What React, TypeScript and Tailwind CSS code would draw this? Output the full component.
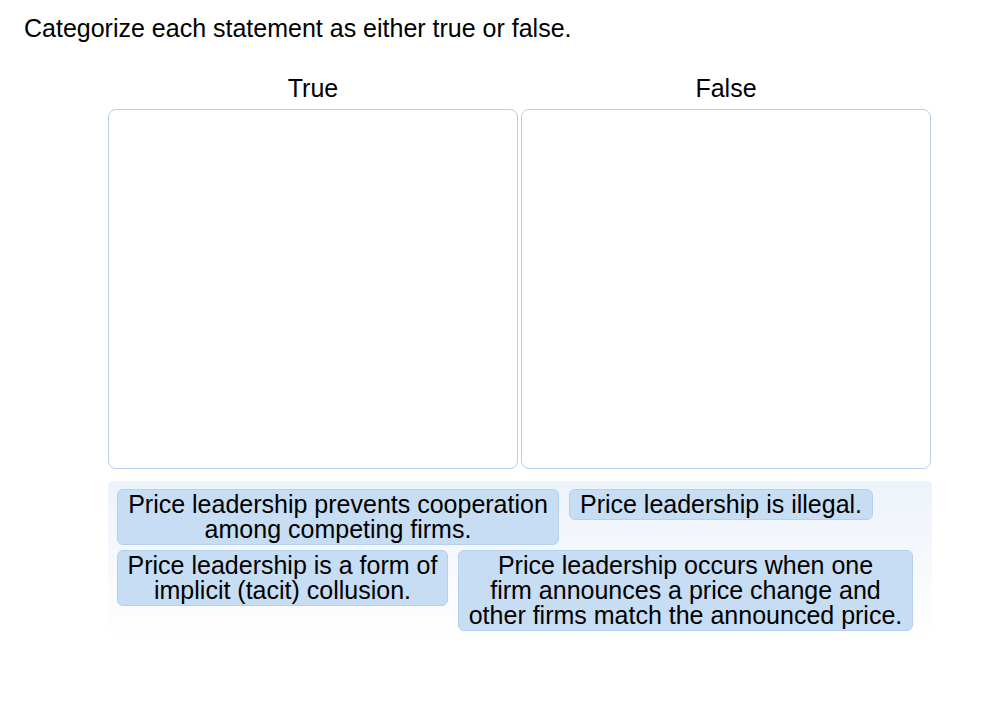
import React from 'react';

const font = { fontFamily: '"Liberation Sans", Arial, sans-serif' };

const chips = [
  { lines: ['Price leadership prevents cooperation', 'among competing firms.'], w: 'w-[442px]' },
  { lines: ['Price leadership is illegal.'], w: 'w-[304px]' },
  { lines: ['Price leadership is a form of', 'implicit (tacit) collusion.'], w: 'w-[331px]' },
  {
    lines: ['Price leadership occurs when one', 'firm announces a price change and', 'other firms match the announced price.'],
    w: 'w-[455px]',
  },
];

const App = () => {
  return (
    <div className="w-[1000px] h-[702px] bg-white text-black" style={font}>
      <div className="pl-[24px] pt-[16px] text-[25px] leading-[25px] whitespace-nowrap">
        Categorize each statement as either true or false.
      </div>

      <div className="ml-[108px] mt-[35px] w-[824px]">
        <div className="flex gap-[3px]">
          {['True', 'False'].map((label) => (
            <div key={label} className="w-[410px] flex flex-col">
              <div className="text-center text-[25px] leading-[25px] h-[33px]">{label}</div>
              <div className="h-[360px] border border-[#b6cfea] rounded-[8px] bg-white" />
            </div>
          ))}
        </div>

        <div className="mt-[12px] rounded-[5px] bg-gradient-to-b from-[#edf3fb] to-white pl-[9px] pr-[9px] pt-[8px] pb-[10px] flex flex-wrap items-start gap-x-[10px] gap-y-[5px]">
          {chips.map((c) => (
            <div
              key={c.lines[0]}
              className={`${c.w} bg-[#c7ddf3] border border-[#b5d0ec] rounded-[6px] px-[4px] py-[2px] text-center text-[25px] leading-[25px] whitespace-nowrap`}
            >
              {c.lines.map((l) => (
                <div key={l}>{l}</div>
              ))}
            </div>
          ))}
        </div>
      </div>
    </div>
  );
};

export default App;
